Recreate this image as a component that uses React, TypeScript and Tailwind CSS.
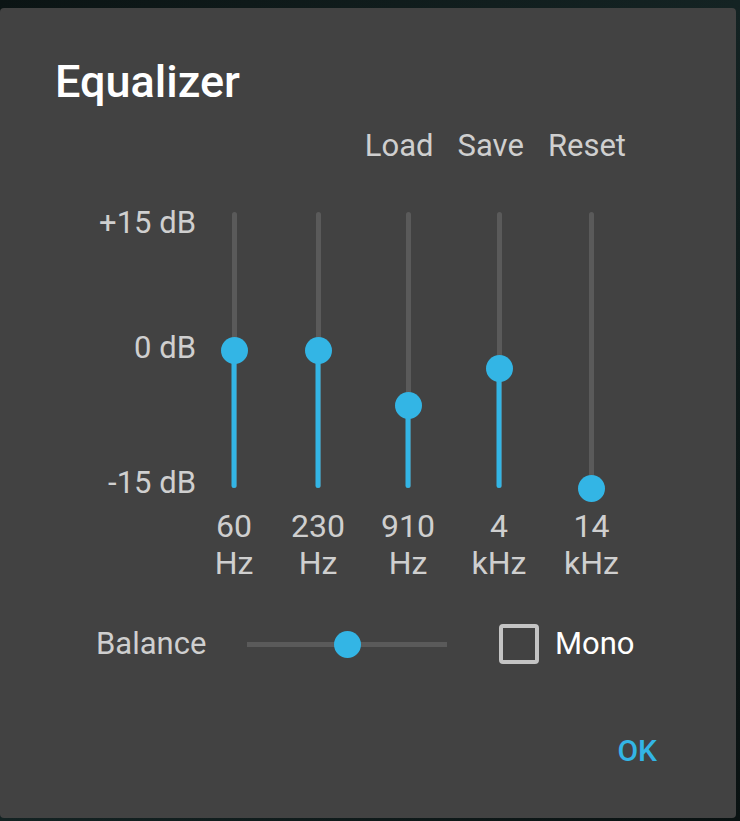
import React from "react";

type Band = { freq: string; unit: string; db: number; width: string };

const bands: Band[] = [
  { freq: "60", unit: "Hz", db: 0, width: "w-[76px]" },
  { freq: "230", unit: "Hz", db: 0, width: "w-[92px]" },
  { freq: "910", unit: "Hz", db: -6, width: "w-[88px]" },
  { freq: "4", unit: "kHz", db: -2, width: "w-[94px]" },
  { freq: "14", unit: "kHz", db: -15, width: "w-[91px]" },
];

const TRACK = 276;

function VSlider({ db }: { db: number }) {
  // 0 = bottom (-15 dB), 1 = top (+15 dB)
  const pos = (db + 15) / 30;
  const fromBottom = pos * TRACK;
  return (
    <div className="relative mt-[7px] h-[276px] w-[27px] flex justify-center">
      <div className="h-full w-[5px] rounded-full bg-[#5a5a5a]" />
      <div
        className="absolute bottom-0 left-1/2 w-[5px] -translate-x-1/2 rounded-full bg-[#33b5e5]"
        style={{ height: fromBottom }}
      />
      <div
        className="absolute left-0 h-[27px] w-[27px] rounded-full bg-[#33b5e5]"
        style={{ top: TRACK - fromBottom - 13.5 }}
      />
    </div>
  );
}

export default function App() {
  return (
    <div
      className="min-h-[821px] w-[740px] bg-gradient-to-br from-[#0b1414] via-[#142323] to-[#0a1212] pt-[8px]"
      style={{ fontFamily: "Roboto, 'Noto Sans', sans-serif" }}
    >
      <div className="flex h-[810px] w-[736px] flex-col rounded-[4px] bg-[#424242]">
        <h1 className="pl-[55px] pt-[48px] text-[45px] font-medium leading-[52px] text-white">
          Equalizer
        </h1>

        <div className="mt-[20px] flex justify-end gap-[24px] pr-[110px] text-[31px] leading-[36px] text-[#cfcfcf]">
          <span>Load</span>
          <span>Save</span>
          <span>Reset</span>
        </div>

        <div className="mt-[41px] flex items-start pl-[76px]">
          <div className="flex w-[120px] flex-col items-end text-[31px] leading-[36px] text-[#cfcfcf]">
            <span>+15 dB</span>
            <span className="mt-[89px]">0 dB</span>
            <span className="mt-[99px]">-15 dB</span>
          </div>
          {bands.map((b) => (
            <div key={b.freq} className={`${b.width} flex flex-col items-center`}>
              <VSlider db={b.db} />
              <div className="mt-[20px] flex flex-col items-center text-[32px] leading-[37px] text-[#cfcfcf]">
                <span>{b.freq}</span>
                <span>{b.unit}</span>
              </div>
            </div>
          ))}
        </div>

        <div className="mt-[42px] flex h-[40px] items-center pl-[96px]">
          <span className="w-[151px] text-[31px] leading-[36px] text-[#cfcfcf]">Balance</span>
          <div className="relative flex h-[27px] w-[200px] items-center">
            <div className="h-[5px] w-full bg-[#5a5a5a]" />
            <div className="absolute left-[86.5px] top-0 h-[27px] w-[27px] rounded-full bg-[#33b5e5]" />
          </div>
          <div className="ml-[52px] h-[40px] w-[40px] rounded-[4px] border-[4px] border-[#c4c4c4]" />
          <span className="ml-[16px] text-[31px] leading-[36px] text-white">Mono</span>
        </div>

        <div className="mt-[69px] flex justify-end pr-[79px]">
          <span className="text-[30px] font-medium leading-[36px] text-[#33b5e5]">OK</span>
        </div>
      </div>
    </div>
  );
}
